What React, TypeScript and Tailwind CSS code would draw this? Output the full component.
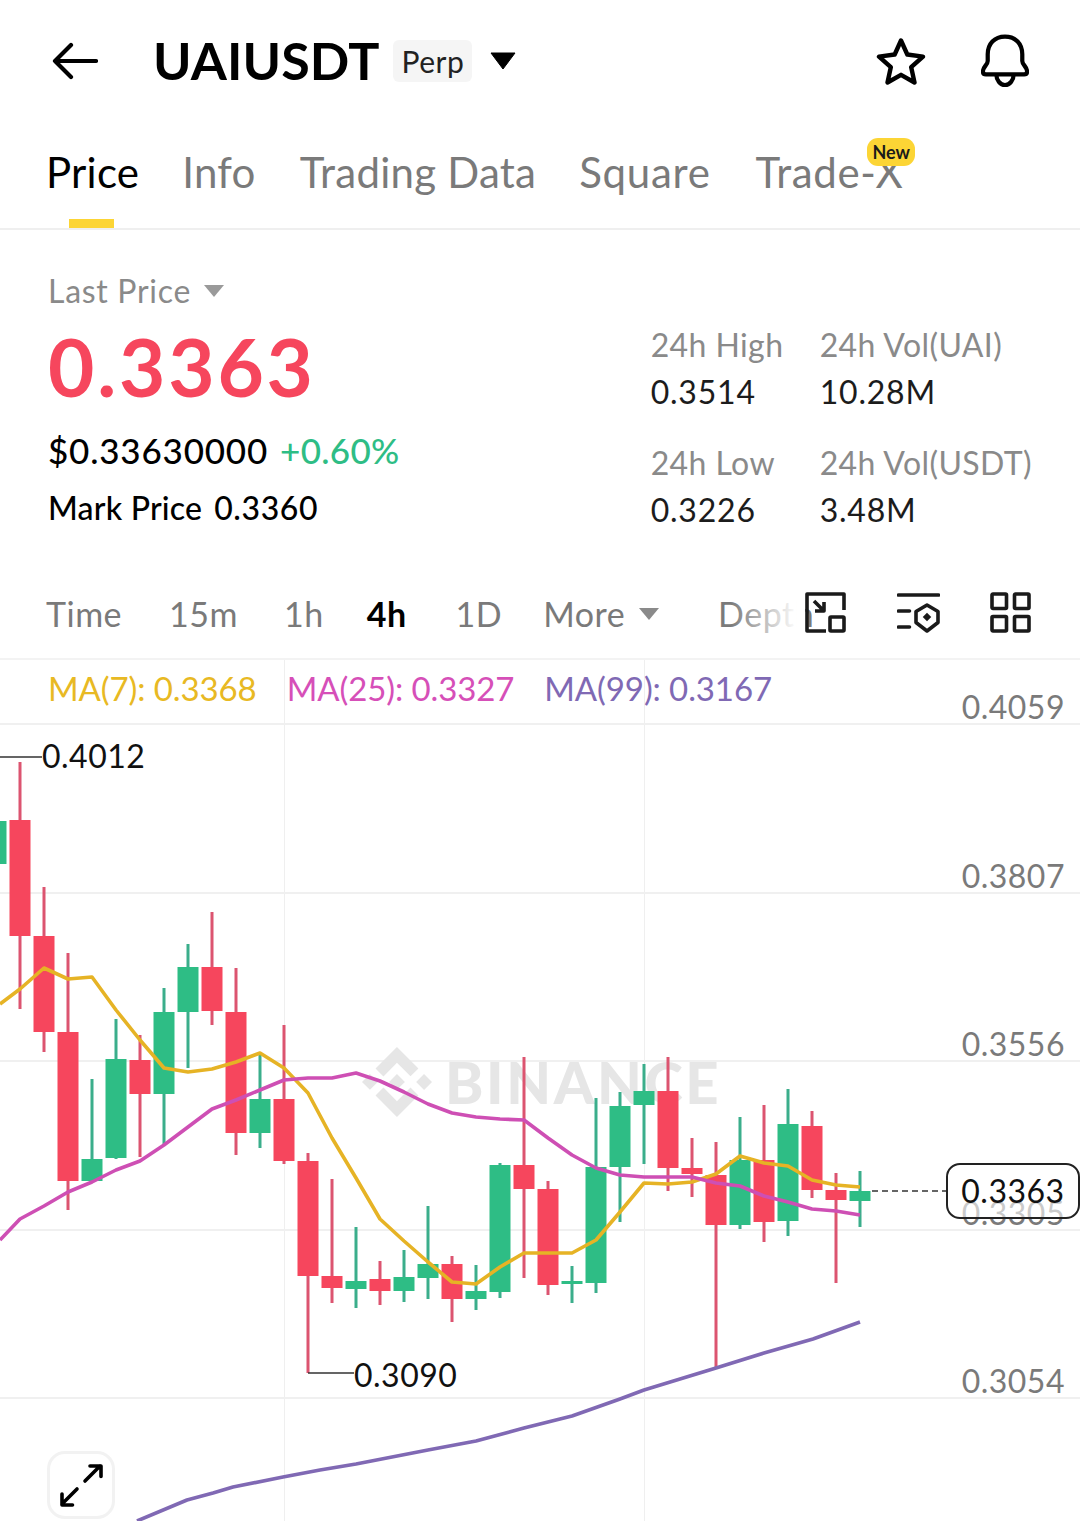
import React from "react";
import { SiBinance } from "react-icons/si";

type C = [number, number, number, number, number, "r" | "g"];
const candles: C[] = [
  [-4, 821, 864, 821, 864, "g"],
  [20, 762, 1009, 820, 936, "r"],
  [44, 887, 1052, 936, 1032, "r"],
  [68, 953, 1210, 1032, 1181, "r"],
  [92, 1079, 1181, 1159, 1181, "g"],
  [116, 1019, 1159, 1059, 1158, "g"],
  [140, 1035, 1157, 1060, 1094, "r"],
  [164, 988, 1145, 1012, 1094, "g"],
  [188, 944, 1068, 967, 1012, "g"],
  [212, 912, 1025, 967, 1011, "r"],
  [236, 968, 1155, 1012, 1133, "r"],
  [260, 1053, 1148, 1099, 1133, "g"],
  [284, 1025, 1164, 1099, 1161, "r"],
  [308, 1153, 1373, 1161, 1276, "r"],
  [332, 1179, 1303, 1276, 1288, "r"],
  [356, 1227, 1308, 1281, 1289, "g"],
  [380, 1261, 1305, 1279, 1291, "r"],
  [404, 1250, 1302, 1277, 1291, "g"],
  [428, 1206, 1299, 1264, 1278, "g"],
  [452, 1256, 1322, 1264, 1299, "r"],
  [476, 1265, 1310, 1291, 1299, "g"],
  [500, 1163, 1298, 1165, 1292, "g"],
  [524, 1057, 1278, 1165, 1189, "r"],
  [548, 1181, 1295, 1189, 1285, "r"],
  [572, 1266, 1303, 1281, 1284, "g"],
  [596, 1098, 1293, 1167, 1283, "g"],
  [620, 1092, 1222, 1106, 1167, "g"],
  [644, 1064, 1164, 1091, 1105, "g"],
  [668, 1057, 1191, 1091, 1168, "r"],
  [692, 1138, 1197, 1168, 1174, "r"],
  [716, 1142, 1368, 1175, 1225, "r"],
  [740, 1117, 1229, 1160, 1225, "g"],
  [764, 1105, 1242, 1160, 1222, "r"],
  [788, 1089, 1236, 1124, 1221, "g"],
  [812, 1111, 1198, 1126, 1190, "r"],
  [836, 1173, 1283, 1190, 1200, "r"],
  [860, 1171, 1227, 1191, 1201, "g"],
];

const ma7 =
  "0,1004 20,989 44,968 68,979 92,977 116,1010 140,1040 164,1068 188,1072 212,1069 236,1062 260,1053 284,1068 308,1093 332,1138 356,1178 380,1219 404,1241 428,1262 452,1282 476,1284 500,1267 524,1253 548,1253 572,1253 596,1240 620,1212 644,1183 668,1184 692,1182 716,1174 740,1156 764,1163 788,1166 812,1180 836,1185 860,1187";
const ma25 =
  "0,1240 20,1219 44,1206 68,1192 92,1182 116,1170 140,1161 164,1145 188,1127 212,1109 236,1100 260,1090 284,1080 308,1078 332,1078 356,1073 380,1081 404,1092 428,1104 452,1113 476,1117 500,1119 524,1120 548,1138 572,1155 596,1168 620,1175 644,1177 668,1177 692,1177 716,1183 740,1186 764,1196 788,1202 812,1209 836,1211 860,1215";
const ma99 =
  "137,1521 187,1500 213,1493 233,1487 283,1477 320,1470 356,1464 428,1450 476,1441 524,1428 572,1416 620,1399 644,1390 716,1368 764,1353 813,1339 860,1322";

function Chart() {
  return (
    <svg className="absolute inset-0 h-full w-full" viewBox="0 660 1080 861" fill="none">
      {candles.map(([x, wt, wb, bt, bb, c]) => (
        <g key={x}>
          <rect x={x - 1.5} y={wt} width={3} height={wb - wt} fill={c === "r" ? "#DC5470" : "#3BAE8B"} />
          <rect x={x - 10.5} y={bt} width={21} height={bb - bt} fill={c === "r" ? "#F6465D" : "#2EBD85"} />
        </g>
      ))}
      <polyline points={ma7} stroke="#E6B325" strokeWidth={3.6} strokeLinejoin="round" />
      <polyline points={ma25} stroke="#CE4FB4" strokeWidth={3.6} strokeLinejoin="round" />
      <polyline points={ma99} stroke="#8069B4" strokeWidth={3.6} strokeLinejoin="round" />
      <path d="M0 757H42M308 1373H354" stroke="#333" strokeWidth={1.5} />
      <path d="M872 1191H946" stroke="#333" strokeWidth={1.5} strokeDasharray="6 4" />
    </svg>
  );
}

const Tab = ({ children, className = "" }: { children: React.ReactNode; className?: string }) => (
  <span className={`text-[42px] leading-none text-[#7A7A7A] ${className}`}>{children}</span>
);

const Stat = ({ label, value }: { label: string; value: string }) => (
  <div className="flex flex-col">
    <span className="text-[32px] leading-[40px] text-[#8A8A8A] tracking-[0.4px]">{label}</span>
    <span className="mt-[8px] text-[32px] leading-[38px] text-[#1c1c1c] tracking-[0.8px]">{value}</span>
  </div>
);

const AxisLabel = ({ children, className = "" }: { children: React.ReactNode; className?: string }) => (
  <span className={`absolute right-[15px] text-[32px] leading-[40px] tracking-[0.5px] text-[#7A7A7A] ${className}`}>{children}</span>
);

export default function App() {
  return (
    <div className="relative h-[1521px] w-[1080px] overflow-hidden bg-white font-['Lato','Noto_Sans',sans-serif] text-black">
      {/* header */}
      <header className="flex h-[122px] items-center pl-[52px] pr-[51px]">
        <svg width="46" height="38" viewBox="0 0 46 38" fill="none" stroke="#000" strokeWidth="4.2" strokeLinecap="round" strokeLinejoin="round">
          <path d="M44 19H3M19 3 3 19l16 16" />
        </svg>
        <h1 className="mb-[3px] ml-[55px] text-[52px] font-bold leading-none tracking-[0.1px]">UAIUSDT</h1>
        <span className="ml-[14px] flex h-[42px] w-[79px] items-center justify-center rounded-[6px] bg-[#F5F5F5] text-[30px] leading-none tracking-[0.5px] text-[#222]">Perp</span>
        <svg className="ml-[18px]" width="26" height="18" viewBox="0 0 26 18">
          <path d="M1 1h24L13 17z" fill="#000" stroke="#000" strokeLinejoin="round" />
        </svg>
        <svg className="ml-auto" width="50" height="48" viewBox="0 0 50 48" fill="none" stroke="#000" strokeWidth="4.4" strokeLinejoin="round">
          <path d="M25 3.5 31.3 17.5 47 19.6 35.2 30.2 38.5 45.5 25 37.8 11.5 45.5 14.8 30.2 3 19.6 18.7 17.5Z" />
        </svg>
        <svg className="ml-[55px]" width="48" height="56" viewBox="0 0 50 56" fill="none" stroke="#000" strokeWidth="4.4" strokeLinejoin="round">
          <path d="M7 28V21C7 10 14 2.500 25 2.500S43 10 43 21v7c0 4 5 6 5 11 0 2-1 3-3 3H5c-2 0-3-1-3-3 0-5 5-7 5-11Z" />
          <path d="M16 42c0 6 4 11 9 11s9-5 9-11" />
        </svg>
      </header>

      {/* tabs */}
      <nav className="relative flex h-[108px] items-start border-b-2 border-[#EFEFEF] pl-[46px] pt-[29px]">
        <Tab className="tracking-[0.25px] !text-black">Price</Tab>
        <Tab className="ml-[43px] tracking-[0.25px]">Info</Tab>
        <Tab className="ml-[44px] tracking-[0.25px]">Trading Data</Tab>
        <Tab className="ml-[43px] tracking-[0.7px]">Square</Tab>
        <Tab className="relative ml-[45px] tracking-[0.6px]">
          Trade-X
          <span className="absolute -top-[13px] -right-[12px] flex h-[28px] w-[48px] items-center justify-center rounded-[11px] bg-[#FCD535] text-[18px] font-bold leading-none tracking-normal text-[#1a1a1a]">New</span>
        </Tab>
        <span className="absolute bottom-0 left-[69px] h-[9px] w-[45px] bg-[#FCD535]" />
      </nav>

      {/* price block */}
      <section className="flex h-[329px] justify-between pl-[48px] pr-[48px]">
        <div className="flex flex-col">
          <div className="mt-[45px] flex items-center text-[32px] leading-[32px] tracking-[0.7px] text-[#8A8A8A]">
            Last Price
            <svg className="ml-[12px]" width="22" height="14" viewBox="0 0 22 14"><path d="M1 1h20L11 13z" fill="#9A9A9A" /></svg>
          </div>
          <div className="mt-[14px] text-[80px] font-bold leading-[90px] tracking-[2.8px] text-[#F6465D]">0.3363</div>
          <div className="mt-[18px] flex items-center text-[35px] font-medium leading-[42px]">
            <span className="tracking-[0.8px]">$0.33630000</span>
            <span className="ml-[12px] tracking-[0.3px] text-[#2EBD85]">+0.60%</span>
          </div>
          <div className="mt-[17px] flex text-[32px] font-medium leading-[40px]">
            <span className="tracking-[0.2px]">Mark Price</span>
            <span className="ml-[12px] tracking-[0.6px]">0.3360</span>
          </div>
        </div>
        <div className="mt-[95px] grid h-fit grid-cols-[169px_auto] gap-y-[32px]">
          <Stat label="24h High" value="0.3514" />
          <Stat label="24h Vol(UAI)" value="10.28M" />
          <Stat label="24h Low" value="0.3226" />
          <Stat label="24h Vol(USDT)" value="3.48M" />
        </div>
      </section>

      {/* interval row */}
      <div className="relative flex h-[101px] items-center border-b-2 border-[#F3F3F3] pl-[46px] pr-[48px] pt-[10px] text-[34px] leading-none tracking-[0.5px] text-[#7A7A7A]">
        <span>Time</span>
        <span className="ml-[47px]">15m</span>
        <span className="ml-[46px]">1h</span>
        <span className="ml-[43px] font-bold text-black">4h</span>
        <span className="ml-[49px]">1D</span>
        <span className="ml-[41px]">More</span>
        <svg className="ml-[13px]" width="22" height="14" viewBox="0 0 22 14"><path d="M1 1h20L11 13z" fill="#8A8A8A" /></svg>
        <span className="ml-[58px]">Depth</span>
        <span className="absolute left-[730px] top-0 h-full w-[75px] bg-gradient-to-r from-white/0 to-white to-[90%]" />
        <div className="absolute left-[805px] top-[33px] flex items-center">
          <svg width="41" height="41" viewBox="0 0 41 41" fill="none" stroke="#1a1a1a" strokeWidth="3.6" strokeLinejoin="round">
            <path d="M39 18V2H2v37h19" />
            <path d="M9 9l10 10M19 10v9h-9" />
            <rect x="25" y="25" width="14" height="14" rx="1" />
          </svg>
          <svg className="ml-[51px]" width="43" height="41" viewBox="0 0 43 41" fill="none" stroke="#1a1a1a" strokeWidth="3.6" strokeLinecap="round" strokeLinejoin="round">
            <path d="M1.500 3h40M1.500 19h11M1.500 35h11" />
            <path d="M30 13l11 6.500v11L30 39l-11-8.500v-11Z" />
            <rect x="27" y="22" width="6" height="6" fill="#1a1a1a" stroke="none" transform="rotate(45 30 25)" />
          </svg>
          <svg className="ml-[50px]" width="41" height="41" viewBox="0 0 41 41" fill="none" stroke="#1a1a1a" strokeWidth="3.6" strokeLinejoin="round">
            <rect x="2" y="2" width="14.500" height="14.500" rx="1" />
            <rect x="24.500" y="2" width="14.500" height="14.500" rx="1" />
            <rect x="2" y="24.500" width="14.500" height="14.500" rx="1" />
            <rect x="24.500" y="24.500" width="14.500" height="14.500" rx="1" />
          </svg>
        </div>
      </div>

      {/* chart */}
      <section className="relative h-[861px]">
        <div className="absolute left-[284px] top-0 h-full w-[1px] bg-[#EFEFEF]" />
        <div className="absolute left-[644px] top-0 h-full w-[1px] bg-[#EFEFEF]" />
        <div className="absolute left-0 top-[63px] h-[2px] w-full bg-[#F0F0F0]" />
        <div className="absolute left-0 top-[232px] h-[2px] w-full bg-[#F0F0F0]" />
        <div className="absolute left-0 top-[400px] h-[2px] w-full bg-[#F0F0F0]" />
        <div className="absolute left-0 top-[569px] h-[2px] w-full bg-[#F0F0F0]" />
        <div className="absolute left-0 top-[737px] h-[2px] w-full bg-[#F0F0F0]" />
        <div className="absolute left-[362px] top-[387px] flex items-center text-[#E6E6E6]">
          <SiBinance size={70} />
          <span className="ml-[13px] text-[58px] font-black leading-none tracking-[2.6px]">BINANCE</span>
        </div>
        <Chart />
        <div className="relative flex h-[56px] items-center pl-[48px] text-[33px] leading-none tracking-[-0.1px]">
          <span className="text-[#E8B923]">MA(7): 0.3368</span>
          <span className="ml-[30px] text-[#D64FB8]">MA(25): 0.3327</span>
          <span className="ml-[30px] text-[#8069B4]">MA(99): 0.3167</span>
        </div>
        <AxisLabel className="top-[27px]">0.4059</AxisLabel>
        <AxisLabel className="top-[196px]">0.3807</AxisLabel>
        <AxisLabel className="top-[364px]">0.3556</AxisLabel>
        <AxisLabel className="top-[533px]">0.3305</AxisLabel>
        <AxisLabel className="top-[701px]">0.3054</AxisLabel>
        <span className="absolute left-[42px] top-[76px] text-[32px] leading-[40px] tracking-[0.5px] text-[#111]">0.4012</span>
        <span className="absolute left-[354px] top-[695px] text-[32px] leading-[40px] tracking-[0.5px] text-[#111]">0.3090</span>
        <span className="absolute left-[946px] top-[503px] flex h-[56px] w-[134px] items-center justify-center rounded-[14px] border-2 border-[#222] bg-white/60 text-[32px] leading-none tracking-[0.5px] text-[#111]">0.3363</span>
        <button className="absolute left-[47px] top-[791px] flex h-[68px] w-[68px] items-center justify-center rounded-[18px] border-[3px] border-[#F2F2F2] bg-white">
          <svg width="44" height="44" viewBox="0 0 44 44" fill="none" stroke="#000" strokeWidth="3.6" strokeLinecap="round" strokeLinejoin="round">
            <path d="M26 18 41 3M31 3h11v10.500M18 26 3 41M3 31v11h10.500" />
          </svg>
        </button>
      </section>
    </div>
  );
}
